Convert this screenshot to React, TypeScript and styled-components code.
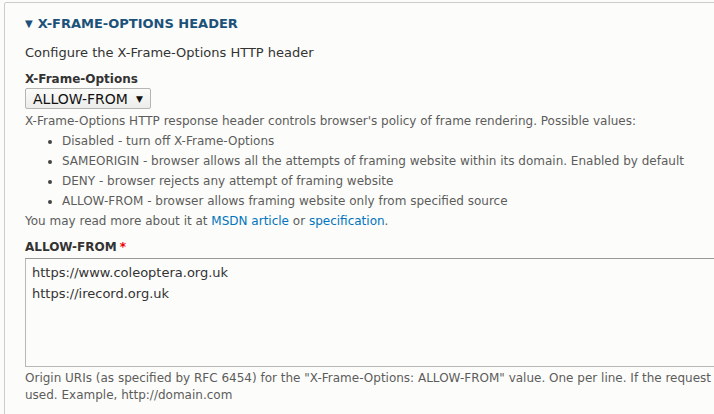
import React from "react";
import styled, { createGlobalStyle } from "styled-components";

const Global = createGlobalStyle`
  html, body { margin: 0; padding: 0; background: #fcfcfa; overflow: hidden; }
  body { font-family: "DejaVu Sans", Verdana, sans-serif; color: #333; }
`;

const Page = styled.div`
  padding: 2px 0 0 4px;
  width: 760px;
`;

const Fieldset = styled.section`
  border: 1px solid #ccc;
  border-radius: 2px;
  background: #fcfcfa;
  padding: 0 0 20px 20px;
`;

const Summary = styled.div`
  display: flex;
  align-items: center;
  gap: 5px;
  height: 40px;
  color: #1b5279;
  font-weight: bold;
  font-size: 13px;
  text-transform: uppercase;
`;

const Triangle = styled.span<{ $size?: number }>`
  font-size: ${(p) => p.$size ?? 9}px;
`;

const Intro = styled.p`
  margin: 0;
  font-size: 13px;
  line-height: 20px;
`;

const Item = styled.div<{ $top?: number }>`
  margin-top: ${(p) => p.$top ?? 0}px;
`;

const Label = styled.div`
  font-weight: bold;
  font-size: 12px;
  line-height: 18px;
  color: #333;
`;

const Req = styled.span`
  color: #e00;
  margin-left: 3px;
`;

const Select = styled.div`
  display: inline-flex;
  align-items: center;
  gap: 8px;
  height: 19px;
  padding: 0 7px;
  border: 1px solid #b5b5b2;
  border-radius: 2px;
  background: linear-gradient(#fbfbf9, #ececea);
  color: #111;
  font-size: 14px;
`;

const Desc = styled.div`
  margin-top: 2px;
  font-size: 12px;
  line-height: 20px;
  color: #5c5c5c;
`;

const List = styled.ul`
  margin: 0;
  padding: 0 0 0 37px;
  list-style: disc;
  li::marker { color: #444; }
`;

const Link = styled.a`
  color: #0074bd;
  text-decoration: none;
`;

const TextArea = styled.div`
  box-sizing: border-box;
  height: 109px;
  margin-top: 2px;
  border: 1px solid #b8b8b8;
  border-top-color: #999;
  background: #fcfcfa;
  padding: 3px 6px;
  font-size: 13px;
  line-height: 21px;
  color: #333;
`;

const FieldDesc = styled(Desc)`
  line-height: 17px;
  margin-top: 3px;
  width: 740px;
`;

export default function App() {
  return (
    <>
      <Global />
      <Page>
        <Fieldset>
          <Summary>
            <Triangle $size={10}>▼</Triangle>
            <span>X-Frame-Options header</span>
          </Summary>
          <Intro>Configure the X-Frame-Options HTTP header</Intro>
          <Item $top={7}>
            <Label>X-Frame-Options</Label>
            <Select>
              <span>ALLOW-FROM</span>
              <Triangle>▼</Triangle>
            </Select>
            <Desc>
              X-Frame-Options HTTP response header controls browser's policy of frame rendering. Possible values:
              <List>
                <li>Disabled - turn off X-Frame-Options</li>
                <li>SAMEORIGIN - browser allows all the attempts of framing website within its domain. Enabled by default</li>
                <li>DENY - browser rejects any attempt of framing website</li>
                <li>ALLOW-FROM - browser allows framing website only from specified source</li>
              </List>
              You may read more about it at <Link href="#">MSDN article</Link> or <Link href="#">specification</Link>.
            </Desc>
          </Item>
          <Item $top={7}>
            <Label>
              ALLOW-FROM<Req>*</Req>
            </Label>
            <TextArea>
              https://www.coleoptera.org.uk
              <br />
              https://irecord.org.uk
            </TextArea>
            <FieldDesc>
              Origin URIs (as specified by RFC 6454) for the "X-Frame-Options: ALLOW-FROM" value. One per line. If the request
              <br />
              used. Example, http://domain.com
            </FieldDesc>
          </Item>
        </Fieldset>
      </Page>
    </>
  );
}
